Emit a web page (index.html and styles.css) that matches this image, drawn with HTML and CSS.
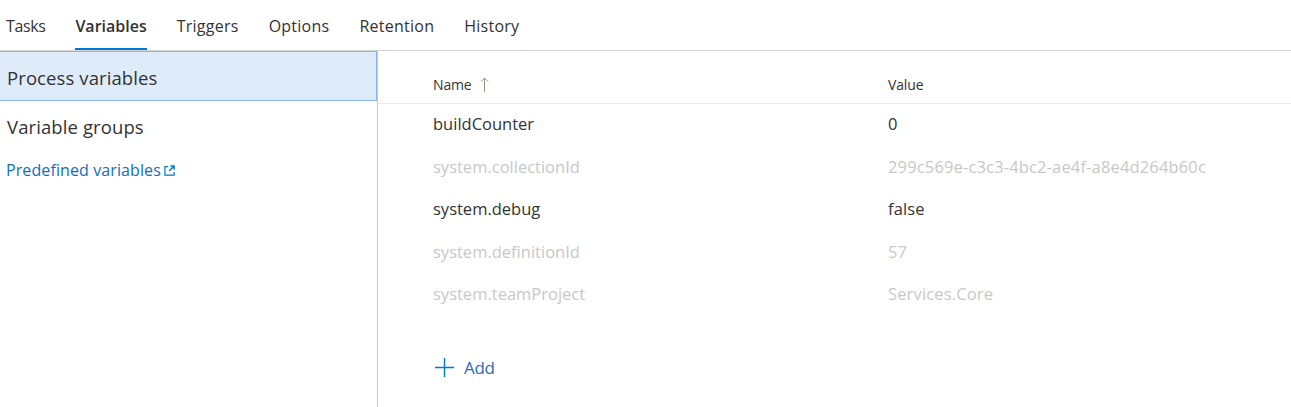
FILE: index.html
```html
<!DOCTYPE html>
<html lang="en">
<head>
<meta charset="utf-8">
<title>Variables</title>
<link rel="stylesheet" href="styles.css">
</head>
<body>
<nav class="tabs">
  <a class="tab">Tasks</a>
  <a class="tab active">Variables</a>
  <a class="tab">Triggers</a>
  <a class="tab">Options</a>
  <a class="tab">Retention</a>
  <a class="tab">History</a>
</nav>
<div class="main">
  <aside class="side">
    <div class="side-item selected">Process variables</div>
    <div class="side-item">Variable groups</div>
    <a class="side-link">Predefined variables<svg class="ext" width="11" height="11" viewBox="0 0 12 12" fill="none" stroke="#0078d7" stroke-width="1.3"><path d="M4.5 1.7H1v9.3h10V7.5"/><path d="M7 1.2h4v4M10.8 1.4 5.6 6.6" stroke-width="1.6"/></svg></a>
  </aside>
  <section class="content">
    <div class="row head">
      <div class="name">Name<svg class="sort" width="9" height="15" viewBox="0 0 9 15" fill="none" stroke="#9a8f84" stroke-width="1"><path d="M4.5 15V1M1 4.5 4.5 1 8 4.5"/></svg></div>
      <div class="value">Value</div>
    </div>
    <div class="row"><div class="name">buildCounter</div><div class="value">0</div></div>
    <div class="row muted"><div class="name">system.collectionId</div><div class="value">299c569e-c3c3-4bc2-ae4f-a8e4d264b60c</div></div>
    <div class="row"><div class="name">system.debug</div><div class="value">false</div></div>
    <div class="row muted"><div class="name">system.definitionId</div><div class="value">57</div></div>
    <div class="row muted"><div class="name">system.teamProject</div><div class="value">Services.Core</div></div>
    <a class="add"><svg width="19" height="19" viewBox="0 0 19 19" stroke="#0078d4" stroke-width="1.4"><path d="M0 9.5h19M9.5 0v19"/></svg>Add</a>
  </section>
</div>
</body>
</html>
```
FILE: styles.css
```css
html, body { margin: 0; padding: 0; height: 100%; background: #fff; overflow: hidden; }
body { font-family: "Open Sans", "Noto Sans", sans-serif; color: #333; display: flex; flex-direction: column; }
.tabs { display: flex; gap: 30px; height: 50px; padding-left: 6px; border-bottom: 1px solid #d4d4d4; flex: none; }
.tab { font-size: 16px; letter-spacing: 0.25px; line-height: 52px; height: 50px; box-sizing: border-box; color: #333; }
.tab:first-child { letter-spacing: -0.4px; }
.tab.active { font-weight: 600; letter-spacing: 0; border-bottom: 2px solid #0078d4; }
.main { display: flex; flex: 1; min-height: 0; }
.side { width: 377px; flex: none; border-right: 1px solid #c8c8c8; }
.side-item { height: 50px; line-height: 52px; font-size: 18.5px; letter-spacing: 0.1px; padding-left: 7px; box-sizing: border-box; color: #333; }
.side-item.selected { background: #deecf9; border: 1px solid #8ab4f8; border-left: 0; }
.side-link { display: flex; align-items: center; gap: 3px; font-size: 16px; letter-spacing: 0.1px; color: #106ebe; padding-left: 6px; height: 38px; }
.content { flex: 1; padding-top: 1px; }
.row { display: flex; height: 42.5px; align-items: center; padding-left: 55px; font-size: 16.5px; color: #333; padding-bottom: 3px; box-sizing: border-box; }
.row.muted { color: #c8c8c8; }
.row .value { letter-spacing: 0.15px; }
.name { width: 455px; flex: none; display: flex; align-items: center; }
.row.head { height: 52px; align-items: flex-end; padding-bottom: 9px; border-bottom: 1px solid #eaeaea; font-size: 14px; letter-spacing: -0.15px; }
.row.head .value { letter-spacing: -0.15px; }
.sort { margin-left: 8px; }
.add { display: flex; align-items: center; gap: 10px; margin: 39px 0 0 57px; font-size: 17px; letter-spacing: -0.3px; color: #2b6cb8; }
```
